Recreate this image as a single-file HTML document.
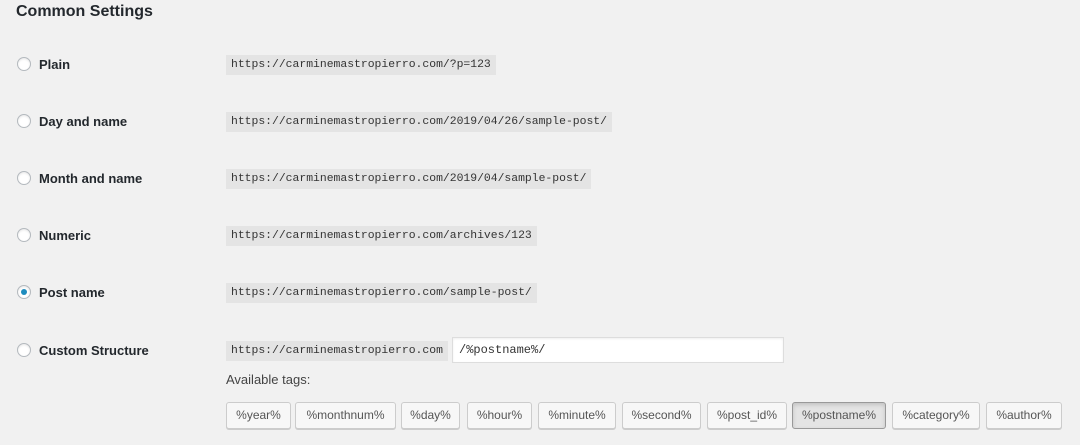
<!DOCTYPE html>
<html><head><meta charset="utf-8"><style>
body{margin:0;width:1080px;height:445px;background:#f1f1f1;font-family:"Liberation Sans",sans-serif;color:#23282d;position:relative;overflow:hidden}
.a{position:absolute}
h2{position:absolute;left:16px;top:3px;margin:0;font-size:16px;font-weight:600;color:#23282d}
.r{position:absolute;left:17px;width:14px;height:14px;border:1px solid #b4b9be;border-radius:50%;background:#fff;box-sizing:border-box;box-shadow:inset 0 1px 2px rgba(0,0,0,.1)}
.r.on::after{content:"";position:absolute;left:3px;top:3px;width:6px;height:6px;border-radius:50%;background:#1e8cbe}
.l{position:absolute;left:39px;font-size:13px;font-weight:600;color:#23282d}
code{position:absolute;left:226px;height:20px;line-height:20px;padding:0 5px;background:#e4e4e4;font-family:"Liberation Mono",monospace;font-size:11.4px;color:#333}
.b{position:absolute;top:402px;height:27px;box-sizing:border-box;border:1px solid #ccc;border-radius:3px;background:#f7f7f7;font-size:12px;color:#555;text-align:center;line-height:25px;box-shadow:0 1px 0 #ccc}
</style></head><body>
<h2>Common Settings</h2>
<div class="r" style="top:57px"></div><div class="l" style="top:57px">Plain</div><code style="top:55px">https://carminemastropierro.com/?p=123</code>
<div class="r" style="top:114px"></div><div class="l" style="top:114px">Day and name</div><code style="top:112px">https://carminemastropierro.com/2019/04/26/sample-post/</code>
<div class="r" style="top:171px"></div><div class="l" style="top:171px">Month and name</div><code style="top:169px">https://carminemastropierro.com/2019/04/sample-post/</code>
<div class="r" style="top:228px"></div><div class="l" style="top:228px">Numeric</div><code style="top:226px">https://carminemastropierro.com/archives/123</code>
<div class="r on" style="top:285px"></div><div class="l" style="top:285px">Post name</div><code style="top:283px">https://carminemastropierro.com/sample-post/</code>
<div class="r" style="top:343px"></div><div class="l" style="top:343px">Custom Structure</div><code style="top:341px">https://carminemastropierro.com</code>
<div class="a" style="left:452px;top:337px;width:332px;height:26px;box-sizing:border-box;background:#fff;border:1px solid #ddd;box-shadow:inset 0 1px 2px rgba(0,0,0,.07);font-family:'Liberation Mono',monospace;font-size:12px;line-height:24px;padding-left:6px;color:#333">/%postname%/</div>
<div class="a" style="left:226px;top:372px;font-size:13px;color:#444">Available tags:</div>
<div class="b" style="left:226px;width:65px">%year%</div>
<div class="b" style="left:295px;width:101px">%monthnum%</div>
<div class="b" style="left:401px;width:59px">%day%</div>
<div class="b" style="left:467px;width:65px">%hour%</div>
<div class="b" style="left:538px;width:78px">%minute%</div>
<div class="b" style="left:622px;width:79px">%second%</div>
<div class="b" style="left:707px;width:80px">%post_id%</div>
<div class="b" style="left:792px;width:94px;background:#e4e4e4;border-color:#999;box-shadow:inset 0 2px 4px rgba(0,0,0,.15)">%postname%</div>
<div class="b" style="left:892px;width:88px">%category%</div>
<div class="b" style="left:986px;width:76px">%author%</div>
</body></html>
